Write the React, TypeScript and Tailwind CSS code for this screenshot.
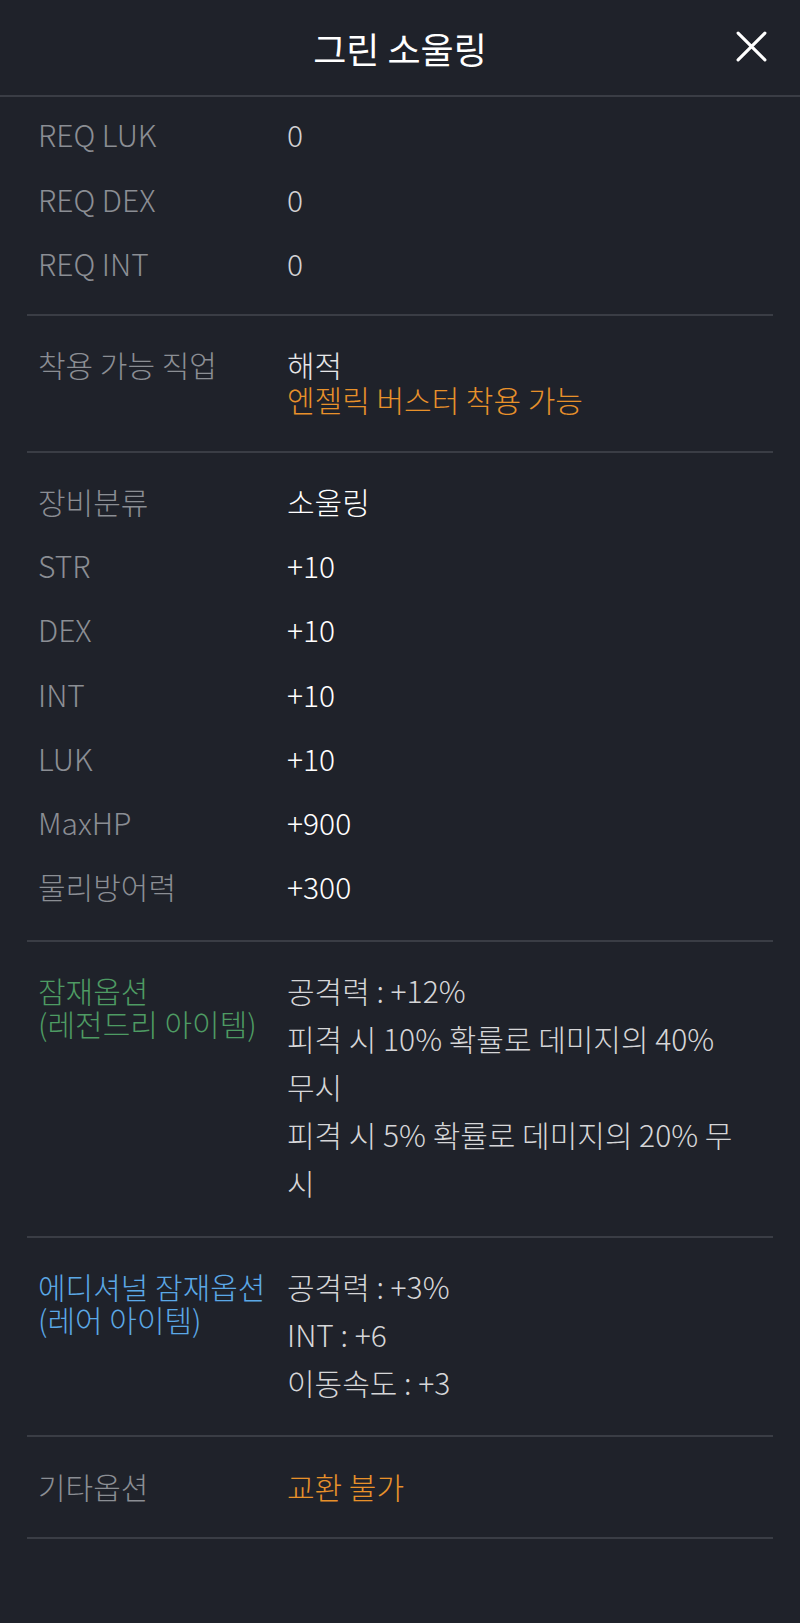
import type { ReactNode } from 'react'

type Row = { label: string; value: ReactNode }

const reqRows: Row[] = [
  { label: 'REQ LUK', value: '0' },
  { label: 'REQ DEX', value: '0' },
  { label: 'REQ INT', value: '0' },
]

const statRows: Row[] = [
  { label: '장비분류', value: '소울링' },
  { label: 'STR', value: '+10' },
  { label: 'DEX', value: '+10' },
  { label: 'INT', value: '+10' },
  { label: 'LUK', value: '+10' },
  { label: 'MaxHP', value: '+900' },
  { label: '물리방어력', value: '+300' },
]

function Divider() {
  return <div className="mx-[27px] h-[2px] bg-[#3a3d45]" />
}

function Line({ label, value, valueClass = 'text-white' }: { label: ReactNode; value: ReactNode; valueClass?: string }) {
  return (
    <div className="flex leading-[35px]">
      <div className="w-[249px] shrink-0 text-[#8b8e94]">{label}</div>
      <div className={valueClass}>{value}</div>
    </div>
  )
}

export default function App() {
  return (
    <div
      className="min-h-[1623px] w-[800px] bg-[#1f222a] text-[30px] font-light"
      style={{ fontFamily: '"Noto Sans CJK KR", "Noto Sans", sans-serif' }}
    >
      <header className="relative flex h-[97px] items-center justify-center border-b-2 border-[#3a3d45]">
        <h1 className="text-[36px] font-normal text-white">그린 소울링</h1>
        <button className="absolute right-[32px] top-[30px] h-[33px] w-[33px] text-white" aria-label="닫기">
          <svg viewBox="0 0 32 32" className="h-full w-full" fill="none" stroke="currentColor" strokeWidth="3" strokeLinecap="round">
            <path d="M3 3 L29 29 M29 3 L3 29" />
          </svg>
        </button>
      </header>

      <section className="flex flex-col gap-[29.5px] px-[38px] pb-[33px] pt-[20px]">
        {reqRows.map((r) => (
          <Line key={r.label} label={r.label} value={r.value} valueClass="text-[#d2d2d4]" />
        ))}
      </section>
      <Divider />

      <section className="flex px-[38px] pb-[34px] pt-[31px] leading-[35px]">
        <div className="w-[249px] shrink-0 text-[#8b8e94]">착용 가능 직업</div>
        <div>
          <div className="text-[#e6e6e8]">해적</div>
          <div className="text-[#e8912a]">엔젤릭 버스터 착용 가능</div>
        </div>
      </section>
      <Divider />

      <section className="flex flex-col gap-[29.2px] px-[38px] pb-[36px] pt-[31px]">
        {statRows.map((r) => (
          <Line key={r.label} label={r.label} value={r.value} />
        ))}
      </section>
      <Divider />

      <section className="flex px-[38px] pb-[30px] pt-[24px]">
        <div className="mt-[8px] w-[249px] shrink-0 whitespace-nowrap leading-[33px] text-[#4e9b63]">
          잠재옵션
          <br />
          (레전드리 아이템)
        </div>
        <div className="whitespace-nowrap leading-[48px] text-[#d6d6d8]">
          <div>공격력 : +12%</div>
          <div>
            피격 시 10% 확률로 데미지의 40%
            <br />
            무시
          </div>
          <div>
            피격 시 5% 확률로 데미지의 20% 무
            <br />시
          </div>
        </div>
      </section>
      <Divider />

      <section className="flex px-[38px] pb-[29px] pt-[24px]">
        <div className="mt-[8px] w-[249px] shrink-0 whitespace-nowrap leading-[33px] text-[#5ba8e6]">
          에디셔널 잠재옵션
          <br />
          (레어 아이템)
        </div>
        <div className="leading-[48px] text-[#d6d6d8]">
          <div>공격력 : +3%</div>
          <div>INT : +6</div>
          <div>이동속도 : +3</div>
        </div>
      </section>
      <Divider />

      <section className="px-[38px] pb-[33px] pt-[32px]">
        <Line label="기타옵션" value="교환 불가" valueClass="text-[#e8912a]" />
      </section>
      <Divider />
    </div>
  )
}
